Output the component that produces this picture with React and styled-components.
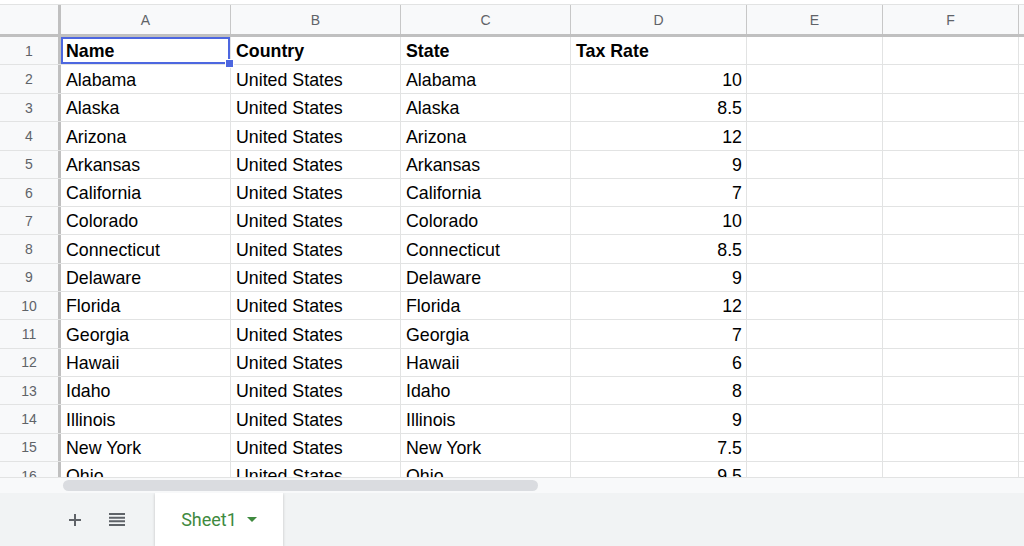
import React from "react";
import styled, { createGlobalStyle } from "styled-components";

const Global = createGlobalStyle`
  html, body { margin: 0; padding: 0; background: #fff; overflow: hidden; }
  body { font-family: "Liberation Sans", Arial, sans-serif; }
`;

const rows = [
  ["Alabama", 10], ["Alaska", 8.5], ["Arizona", 12], ["Arkansas", 9],
  ["California", 7], ["Colorado", 10], ["Connecticut", 8.5], ["Delaware", 9],
  ["Florida", 12], ["Georgia", 7], ["Hawaii", 6], ["Idaho", 8],
  ["Illinois", 9], ["New York", 7.5], ["Ohio", 9.5],
];

const cols = "58px 3px 170px 170px 170px 176px 136px 136px 100px";

const Page = styled.div`
  width: 1024px;
  height: 546px;
  display: flex;
  flex-direction: column;
`;

const TopStrip = styled.div`
  height: 5px;
  flex-shrink: 0;
  background: #fff;
  border-bottom: 1px solid #e2e3e3;
  box-sizing: border-box;
`;

const Sheet = styled.div`
  height: 488px;
  flex-shrink: 0;
  overflow: hidden;
  position: relative;
`;

const Row = styled.div`
  display: grid;
  grid-template-columns: ${cols};
  height: ${(p) => p.$h}px;
  box-sizing: border-box;
  border-bottom: ${(p) => (p.$head ? "3px solid #c0c0c0" : "1px solid #e2e3e3")};
`;

const Corner = styled.div`
  background: #f8f9fa;
`;

const Divider = styled.div`
  background: #c0c0c0;
`;

const ColHead = styled.div`
  background: #f8f9fa;
  border-right: 1px solid #c7c7c7;
  color: #5f6368;
  font-size: 14px;
  display: flex;
  align-items: center;
  justify-content: center;
`;

const RowHead = styled.div`
  background: #f8f9fa;
  color: #5f6368;
  font-size: 14px;
  display: flex;
  align-items: center;
  justify-content: center;
`;

const Cell = styled.div`
  position: relative;
  border-right: 1px solid #e2e3e3;
  font-size: 17.8px;
  color: #000;
  font-weight: ${(p) => (p.$bold ? 700 : 400)};
  display: flex;
  align-items: flex-end;
  padding: 0 4px 2px 5px;
  justify-content: ${(p) => (p.$right ? "flex-end" : "flex-start")};
  ${(p) => p.$sel && "box-shadow: inset 0 0 0 2px #4d67e0;"}
`;

const Handle = styled.span`
  position: absolute;
  right: -4px;
  bottom: -4px;
  width: 7px;
  height: 7px;
  background: #4d67e0;
  border: 1px solid #fff;
  z-index: 2;
`;

const ScrollArea = styled.div`
  position: absolute;
  left: 0;
  right: 0;
  bottom: 0;
  height: 15px;
  background: #f8f9fa;
  border-top: 1px solid #e2e3e3;
  display: flex;
  align-items: center;
`;

const Thumb = styled.div`
  margin-left: 63px;
  width: 475px;
  height: 11px;
  border-radius: 6px;
  background: #dadce0;
`;

const Bottom = styled.div`
  flex: 1;
  background: #f1f3f4;
  display: flex;
  align-items: stretch;
`;

const IconBtn = styled.div`
  width: 42px;
  display: flex;
  align-items: center;
  justify-content: center;
  color: #5f6368;
`;

const Tab = styled.div`
  margin-left: 17px;
  width: 128px;
  background: #fff;
  box-shadow: 0 1px 3px rgba(0,0,0,0.2);
  display: flex;
  align-items: center;
  justify-content: center;
  gap: 10px;
  color: #3f8a3f;
  font-size: 18px;
  font-family: Roboto, "Liberation Sans", sans-serif;
`;

const letters = ["A", "B", "C", "D", "E", "F", ""];

export default function App() {
  return (
    <Page>
      <Global />
      <TopStrip />
      <Sheet>
        <Row $head $h={32}>
          <Corner />
          <Divider />
          {letters.map((l, i) => <ColHead key={i}>{l}</ColHead>)}
        </Row>
        <Row $h={28}>
          <RowHead>1</RowHead>
          <Divider />
          <Cell $bold $sel>Name<Handle /></Cell>
          <Cell $bold>Country</Cell>
          <Cell $bold>State</Cell>
          <Cell $bold>Tax Rate</Cell>
          <Cell /><Cell /><Cell />
        </Row>
        {rows.map(([s, t], i) => (
          <Row key={s} $h={i === 0 ? 29 : 28.3}>
            <RowHead>{i + 2}</RowHead>
            <Divider />
            <Cell>{s}</Cell>
            <Cell>United States</Cell>
            <Cell>{s}</Cell>
            <Cell $right>{t}</Cell>
            <Cell /><Cell /><Cell />
          </Row>
        ))}
        <ScrollArea><Thumb /></ScrollArea>
      </Sheet>
      <Bottom>
        <IconBtn style={{ marginLeft: 54 }}>
          <svg width="16" height="16" viewBox="0 0 16 16"><path d="M8 2v12M2 8h12" stroke="#5f6368" strokeWidth="2" /></svg>
        </IconBtn>
        <IconBtn>
          <svg width="18" height="16" viewBox="0 0 18 16"><path d="M1 2h16M1 5.7h16M1 9.3h16M1 13h16" stroke="#5f6368" strokeWidth="2" /></svg>
        </IconBtn>
        <Tab>
          Sheet1
          <svg width="10" height="6" viewBox="0 0 10 6"><path d="M0 0h10L5 5z" fill="#3f8a3f" /></svg>
        </Tab>
      </Bottom>
    </Page>
  );
}
